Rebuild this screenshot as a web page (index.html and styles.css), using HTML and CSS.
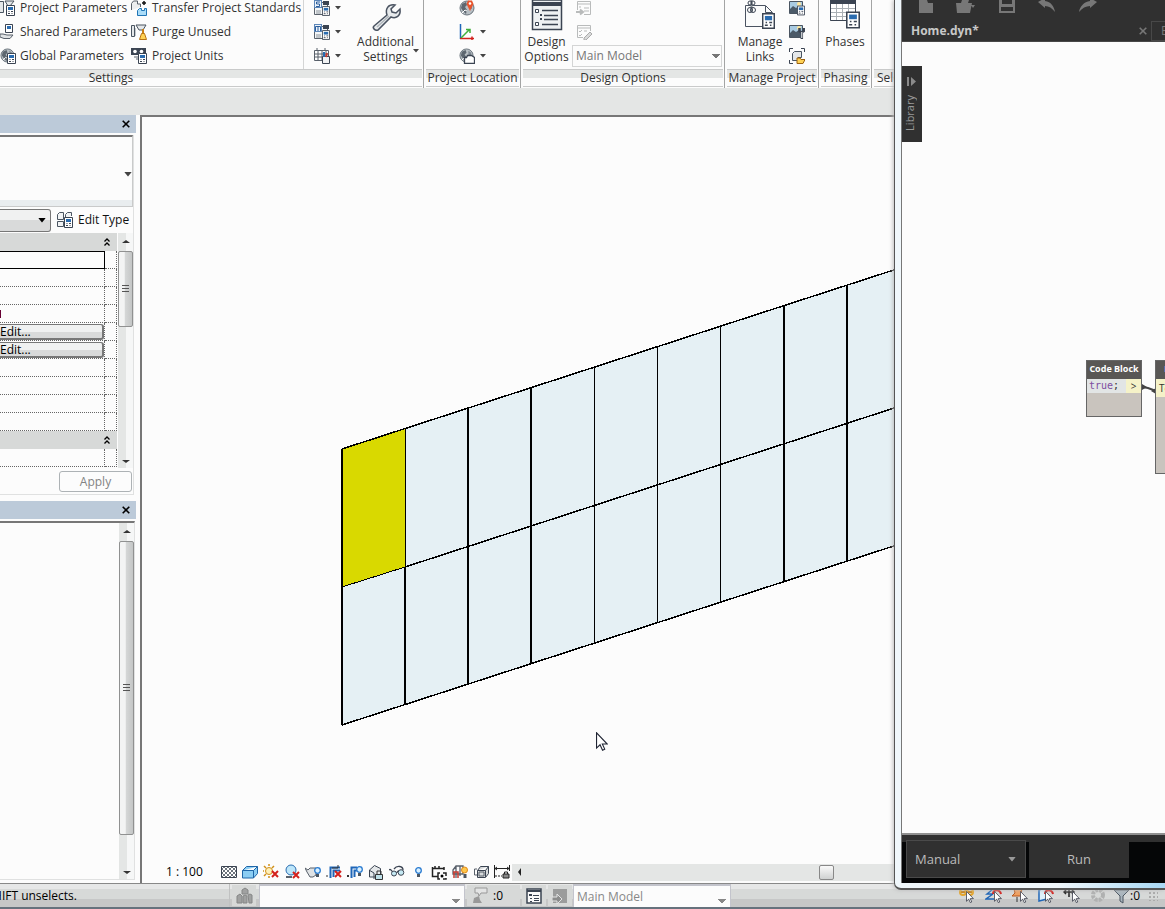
FILE: index.html
```html
<!DOCTYPE html>
<html lang="en">
<head>
	<meta charset="UTF-8">
	<title>Home.dyn</title>
	<link rel="stylesheet" href="styles.css">
</head>
<body>
	<!-- shared icon parts -->
	<svg class="defs" width="0" height="0">
		<symbol id="card" viewBox="0 0 9 11">
			<path d="M.5 .5h8v10h-8z" fill="#fff" stroke="#3b4452"/>
			<path d="M2 2h5v3H2z" fill="#2a6cb0"/>
			<path d="M2.500 6.500h1M5 6.500h2M2 8.500h2M5.500 8.500h1" stroke="#3b4452"/>
		</symbol>
		<symbol id="sheet" viewBox="0 0 16 16">
			<path d="M.5 2.500h13v12H.5z" fill="#f4f6f7" stroke="#59616b"/>
			<path d="M9 1h6v4H9z" fill="#3b4452"/>
			<path d="M0 0h8v8H0z" fill="#5c86b8"/>
			<path d="M1 1h6v6H1z" fill="#eef4fa"/>
			<path d="M2 11h5M2 13h5" stroke="#8a929a"/>
			<use href="#card" x="8" y="6" width="8" height="10"/>
		</symbol>
		<symbol id="globe" viewBox="0 0 16 16">
			<circle cx="8" cy="8" r="7" fill="#b8bfc4" stroke="#69737c"/>
			<path d="M3 4l4-2 1 3-2 2 2 3-1 4-3-3-2-3z" fill="#5d6770"/>
			<path d="M10 3l3 2v4l-3-1z" fill="#7d8790"/>
			<path d="M3 13l3-3 2 1" stroke="#fff" fill="none"/>
		</symbol>
		<symbol id="photo" viewBox="0 0 16 16">
			<path d="M.5 1.500h13v12H.5z" fill="#a9cbe2" stroke="#4a5561"/>
			<path d="M1 13V9l3-3 3 2 3-2 3 3v4z" fill="#4b5a68"/>
			<circle cx="10" cy="4" r="2" fill="#ffe69a"/>
		</symbol>
		<symbol id="cross" viewBox="0 0 8 8">
			<path d="M1 1l6 6M7 1L1 7" stroke="#d3201c" stroke-width="2"/>
		</symbol>
		<symbol id="bulb" viewBox="0 0 7 11">
			<circle cx="3.500" cy="3.500" r="2.800" fill="#d9f0ff" stroke="#2a7bd0" stroke-width="1.300"/>
			<path d="M2 7h3v3H2z" fill="#4a5561"/>
		</symbol>
		<symbol id="pointer" viewBox="0 0 11 17">
			<path d="M.5 .5v14l3.200-3 2.300 5 2-1-2.200-4.700h4.500z" fill="#fff" stroke="#1f2433"/>
		</symbol>
		<symbol id="arrow" viewBox="0 0 6 4">
			<path d="M0 0h6L3 3.500z" fill="currentColor"/>
		</symbol>
		<symbol id="close" viewBox="0 0 8 8">
			<path d="M.7 .7l6.600 6.600M7.300 .7L.7 7.300" stroke="currentColor" stroke-width="1.600"/>
		</symbol>
		<symbol id="chevrons" viewBox="0 0 6 8">
			<path d="M.5 3.500L3 1l2.500 2.500M.5 7.500L3 5l2.500 2.500" fill="none" stroke="#000" stroke-width="1.300"/>
		</symbol>
		<pattern id="checker" width="4" height="4" patternUnits="userSpaceOnUse">
			<path d="M0 0h2v2H0zM2 2h2v2H2z" fill="#6b737b"/>
		</pattern>
	</svg>

	<div class="revit">
		<div class="ribbon">
			<div class="panel settings">
				<div class="tools">
					<div class="col params">
						<button><svg width="16" height="16"><path d="M0 1.500h3.500v11H0M5 1h9l-4 5H8z" fill="#e4e7e9" stroke="#4a5561"/><use href="#card" x="6" y="5" width="9" height="11"/></svg><span>Project Parameters</span></button>
						<button><svg width="16" height="16"><path d="M5.500 .5h7v8h-7z" fill="#fff" stroke="#3b4452"/><path d="M7 2h4v3H7z" fill="#2a6cb0"/><path d="M0 10h3l4 1h6l-3 3.500H4L0 13z" fill="#dfe2e4" stroke="#59616b"/></svg><span>Shared Parameters</span></button>
						<button><svg width="16" height="16"><use href="#globe" width="15" height="15"/><use href="#card" x="7" y="5" width="9" height="11"/></svg><span>Global Parameters</span></button>
					</div>
					<div class="col standards">
						<button><svg width="16" height="16"><path d="M.5 10V3.500L2.500 1h4v3h3v3" fill="#eceeef" stroke="#59616b"/><path d="M11 3h4M13 1v4" stroke="#111" stroke-width="1.500"/><path d="M6.500 15.500v-5l2-2h2v2h3v-2h2v7z" fill="#aadcf8" stroke="#1f74b5"/></svg><span>Transfer Project Standards</span></button>
						<button><svg width="16" height="16"><path d="M.5 12.500V1.500h3v11zM5 1h10l-3 5H8z" fill="#e4e7e9" stroke="#4a5561"/><path d="M4.500 4v8" stroke="#c3c8cc"/><path d="M12 5v4" stroke="#c98014" stroke-width="2"/><path d="M8.500 15.500l2-6h3l2 6z" fill="#ffd255" stroke="#b97312"/></svg><span>Purge Unused</span></button>
						<button><svg width="16" height="16"><path d="M0 0h15v7H0z" fill="#3b4452"/><circle cx="4" cy="3.500" r="1.800" fill="#fff"/><circle cx="10.500" cy="3.500" r="1.800" fill="#fff"/><path d="M3 9h4M5 11h2" stroke="#59616b"/><use href="#card" x="7" y="5" width="9" height="11"/></svg><span>Project Units</span></button>
					</div>
					<div class="col drops">
						<button aria-label="Structural settings"><svg width="16" height="16"><use href="#sheet" width="16" height="16"/><path d="M6 2H2.500v2h3v2.500H2" fill="none" stroke="#2a5d9c"/></svg><svg class="arr" width="6" height="4"><use href="#arrow"/></svg></button>
						<button aria-label="MEP settings"><svg width="16" height="16"><use href="#sheet" width="16" height="16"/><path d="M1.500 7V2.500h5V7M4 2.500V7" fill="none" stroke="#2a5d9c"/></svg><svg class="arr" width="6" height="4"><use href="#arrow"/></svg></button>
						<button aria-label="Panel schedule templates"><svg width="16" height="16"><path d="M.5 2.500h14v10H.5zM0 6h14M0 9h14M4 2v11M8 2v11M12 2v6M3 0v3M11 0v3" fill="#fff" stroke="#59616b"/><path d="M8.500 8.500h7v7h-7z" fill="#f1f2f3" stroke="#3b4452"/><path d="M10 4v5" stroke="#2a6cb0" stroke-width="2"/><path d="M13 5l-1 4" stroke="#c63b30" stroke-width="2"/></svg><svg class="arr" width="6" height="4"><use href="#arrow"/></svg></button>
					</div>
					<button class="big additional">
						<svg width="32" height="32"><path d="M4 26l13-11c-2-6 1-11 8-10l-4 4 1 3 4 1 4-4c1 7-4 10-9 8L8 30c-3 1-6-2-4-4z" fill="#e7eaec" stroke="#4a5361" stroke-width="1.500"/><path d="M7 27L19 16" stroke="#aeb5bb" stroke-width="1.500"/></svg>
						<span>Additional<br>Settings</span>
						<svg class="arr" width="6" height="4"><use href="#arrow"/></svg>
					</button>
				</div>
				<h2>Settings</h2>
			</div>

			<div class="panel location">
				<div class="tools">
					<div class="col drops">
						<button aria-label="Location"><svg width="16" height="16"><use href="#globe" width="16" height="16"/><path d="M11 11L7.500 4 9 .5h4L14.500 4z" fill="#e8532b"/><circle cx="11" cy="3.500" r="1.300" fill="#fff"/></svg></button>
						<button aria-label="Coordinates"><svg width="16" height="16"><path d="M1.500 0v15" stroke="#1f66b8" stroke-width="1.500"/><path d="M1 14.500h14M13 12.500v4" stroke="#d3201c" stroke-width="1.500"/><path d="M2 14l8-8M7 5.500h4V9" fill="none" stroke="#3fae3a" stroke-width="1.500"/></svg><svg class="arr" width="6" height="4"><use href="#arrow"/></svg></button>
						<button aria-label="Position"><svg width="16" height="16"><use href="#globe" width="15" height="15"/><path d="M5.500 15.500v-6h2l1-2h4l3 2v6z" fill="#fff" stroke="#3b4452" stroke-width="1.300"/></svg><svg class="arr" width="6" height="4"><use href="#arrow"/></svg></button>
					</div>
				</div>
				<h2>Project Location</h2>
			</div>

			<div class="panel options">
				<div class="tools">
					<button class="big">
						<svg width="32" height="32"><path d="M1.500 0h29v29.500h-29z" fill="#eef1f3" stroke="#3b4452" stroke-width="1.500"/><path d="M1 2h30v4H1z" fill="#3b4452"/><path d="M4.500 9.500h3v3h-3zM4.500 22.500h3v3h-3z" fill="#fff" stroke="#3b4452"/><path d="M11 10.500h16M13 15.500h14M13 19.500h14M11 24.500h16" stroke="#3b4452" stroke-width="1.300"/><path d="M9 14h2v2H9zM9 18h2v2H9z" fill="#3b4452"/></svg>
						<span>Design<br>Options</span>
					</button>
					<div class="col picks">
						<button disabled aria-label="Add to set"><svg width="16" height="16"><path d="M1.500 10V1.500h13v13H8M1 4h14M8 8h5M8 11h5M3 7h2" fill="none" stroke="#b9bbbb"/><path d="M0 12h6M4 9.500L7 12l-3 2.500" fill="none" stroke="#b9bbbb" stroke-width="2"/></svg></button>
						<button disabled aria-label="Pick to edit"><svg width="16" height="16"><path d="M14.500 7V1.500h-13v12H7M1 4h14M3 7l1 1 2-2M3 11l1 1 2-2M8 7h3" fill="none" stroke="#b9bbbb"/><path d="M8 14l6-6 2 2-6 6H8z" fill="#d9dada" stroke="#aaa"/></svg></button>
						<select disabled aria-label="Active design option"><option>Main Model</option></select>
					</div>
				</div>
				<h2>Design Options</h2>
			</div>

			<div class="panel manage">
				<div class="tools">
					<button class="big">
						<svg width="32" height="32"><path d="M1.500 5.500h20l7 7v14h-27z" fill="#fafbfb" stroke="#4a5361"/><path d="M21.500 6v6.500H28" fill="none" stroke="#4a5361"/><path d="M7.500 0v12" stroke="#858c92" stroke-width="2"/><circle cx="6" cy="3" r="2" fill="none" stroke="#3b4452"/><circle cx="9" cy="3" r="2" fill="none" stroke="#3b4452"/><circle cx="6" cy="10" r="2.500" fill="none" stroke="#3b4452"/><circle cx="9" cy="10" r="2.500" fill="none" stroke="#3b4452"/><use href="#card" x="18" y="13" width="13" height="16"/></svg>
						<span>Manage<br>Links</span>
					</button>
					<div class="col">
						<button aria-label="Decal types"><svg width="16" height="16"><use href="#photo" width="16" height="16"/><use href="#card" x="8" y="5" width="8" height="11"/></svg></button>
						<button aria-label="Manage images"><svg width="16" height="16"><use href="#photo" width="16" height="16"/><path d="M10.500 4v3l2 1.500L15 7V4M12.800 8v7" fill="none" stroke="#3b4452" stroke-width="2.500"/><path d="M12.800 8v6" stroke="#fff"/></svg></button>
						<button aria-label="Starting view"><svg width="16" height="16"><path d="M.5 4V.5H4M12 .5h3.500V4M.5 12v3.500H4" fill="none" stroke="#3b4452"/><path d="M3.500 12.500v-7l2-2h7v6H9v3z" fill="#e4e7e9" stroke="#4a5561"/><path d="M8 15.500v-5.500h3l1 1.500h4l-2 4z" fill="#ffd255" stroke="#9b6110"/></svg></button>
					</div>
				</div>
				<h2>Manage Project</h2>
			</div>

			<div class="panel phasing">
				<div class="tools">
					<button class="big">
						<svg width="32" height="32"><path d="M1.500 1.500h25v19h-25zM1 8.500h25M1 12.500h25M1 16.500h25M7.500 4v17M13.500 4v17M19.500 4v17" fill="#fff" stroke="#aab0b5"/><path d="M1.500 .5h25v20h-25z" fill="none" stroke="#3b4452"/><path d="M1 0h26v4H1z" fill="#3b4452"/><use href="#card" x="17" y="11" width="14" height="18"/></svg>
						<span>Phases</span>
					</button>
				</div>
				<h2>Phasing</h2>
			</div>

			<div class="panel selection">
				<div class="tools"></div>
				<h2>Selection</h2>
			</div>
		</div>

		<div class="optionbar"></div>

		<div class="work">
			<div class="dock">
				<div class="dock-title"><button aria-label="Close properties"><svg width="8" height="8"><use href="#close"/></svg></button></div>
				<div class="properties">
					<div class="type-picker"><svg width="8" height="5" viewBox="0 0 6 4"><use href="#arrow"/></svg></div>
					<div class="type-row">
						<button class="filter" aria-label="Element filter"><svg width="8" height="5" viewBox="0 0 6 4"><use href="#arrow"/></svg></button>
						<button class="edit-type"><svg width="16" height="16"><path d="M.5 7.500v-5l2-2h4v7zM8.500 6V2.500l2-2h4V4M.5 9.500h6v5h-6z" fill="#f1f3f4" stroke="#4a5561"/><use href="#card" x="7" y="5" width="9" height="11"/></svg>Edit Type</button>
					</div>
					<div class="grid-wrap">
						<table class="grid">
							<colgroup><col class="value"><col class="assoc"></colgroup>
							<tr class="head"><td colspan="2"><svg width="6" height="8"><use href="#chevrons"/></svg></td></tr>
							<tr class="active"><td></td><td></td></tr>
							<tr><td></td><td></td></tr>
							<tr><td></td><td></td></tr>
							<tr><td><i class="caret"></i></td><td></td></tr>
							<tr><td><button>Edit...</button></td><td></td></tr>
							<tr><td><button>Edit...</button></td><td></td></tr>
							<tr><td></td><td></td></tr>
							<tr><td></td><td></td></tr>
							<tr><td></td><td></td></tr>
							<tr><td></td><td></td></tr>
							<tr class="head"><td colspan="2"><svg width="6" height="8"><use href="#chevrons"/></svg></td></tr>
							<tr><td></td><td></td></tr>
						</table>
						<div class="scroll">
							<i class="up"></i>
							<div class="thumb short"></div>
							<i class="down"></i>
						</div>
					</div>
					<div class="apply"><button disabled>Apply</button></div>
				</div>
				<div class="dock-title"><button aria-label="Close project browser"><svg width="8" height="8"><use href="#close"/></svg></button></div>
				<div class="browser">
					<div class="scroll">
						<i class="up"></i>
						<div class="thumb long"></div>
						<i class="down"></i>
					</div>
				</div>
			</div>

			<div class="view">
				<svg class="drawing" width="1023" height="746">
					<g transform="translate(-142 -116)">
						<path d="M342 448L1165 181V457L342 724z" fill="#e5f0f4"/>
						<path d="M342 448L405 428V566L342 586z" fill="#d9d900"/>
						<path d="M405 428V566M594.500 366V642M657.500 346V622M720.500 325V601M342 586L405 566" stroke="#000" fill="none" shape-rendering="crispEdges"/>
						<path d="M342 448V724M405 566V704M468 407V684M531 387V663M784 305V581M847 284V561M910 264V540" stroke="#000" stroke-width="2" shape-rendering="crispEdges"/>
						<path d="M342 448L1165 181M405 566L1165 319M342 724L1165 457" fill="none" stroke="#000" stroke-width="1.500" shape-rendering="crispEdges"/>
						<use href="#pointer" x="596" y="731" width="12" height="19"/>
					</g>
				</svg>
				<div class="viewbar">
					<span class="scale">1 : 100</span>
					<div class="viewicons">
						<svg width="16" height="16"><path d="M.5 2.500h15v11H.5z" fill="#fff"/><path d="M.5 2.500h15v11H.5z" fill="url(#checker)" stroke="#3b4452"/></svg>
						<svg width="16" height="16"><path d="M.5 6.500l4-4h11v7l-4 4.500H.5zM.5 6.500h11l4-4M11.500 6.500V14" fill="#8bcdf3" stroke="#1f66a8"/></svg>
						<svg width="16" height="16"><circle cx="6" cy="7" r="3.500" fill="#fff0b8" stroke="#d09019"/><path d="M6 0v2M6 12v2M0 7h1M1 2l2 2M11 2L9 4M1 12l2-2" stroke="#d09019" stroke-width="1.500"/><use href="#cross" x="8" y="6" width="8" height="8"/></svg>
						<svg width="16" height="16"><circle cx="7" cy="6" r="5" fill="#bde6fa" stroke="#2a6cb0"/><path d="M2 13h6" stroke="#59616b" stroke-width="2"/><use href="#cross" x="8" y="7" width="8" height="8"/></svg>
						<svg width="16" height="16"><path d="M0 4l3 2 2-2h6v7l-3 2H5L2 8z" fill="#dfe2e4" stroke="#59616b"/><use href="#bulb" x="9" y="3" width="7" height="11"/></svg>
						<svg width="16" height="16"><path d="M4.500 14V3.500H14M7.500 13V6.500H14" fill="none" stroke="#1f66b8" stroke-width="2"/><path d="M0 12h2M12 1v3M6 4h6" stroke="#333"/><use href="#cross" x="8" y="6" width="8" height="8"/></svg>
						<svg width="16" height="16"><path d="M4.500 14V3.500H10M7.500 13V6.500H10" fill="none" stroke="#1f66b8" stroke-width="2"/><path d="M0 12h2" stroke="#333" stroke-width="2"/><use href="#bulb" x="9" y="2" width="7" height="11"/></svg>
						<svg width="16" height="16"><path d="M1.500 13V6l5-4.500 6 3V13z" fill="#e4e7e9" stroke="#3b4452"/><path d="M1 6l5 3v6" fill="none" stroke="#3b4452"/><path d="M7.500 10.500h7v5h-7z" fill="#bfe0e8" stroke="#333"/><path d="M9 10V7h4v3" fill="none" stroke="#333"/></svg>
						<svg width="16" height="16"><path d="M0 6c2-2 3 3 6 3s2-2 4-2M5 5c3-4 9-3 9 1" fill="none" stroke="#3b4452" stroke-width="1.300"/><circle cx="5" cy="9.500" r="2.500" fill="#c5e9f3" stroke="#3b4452"/><circle cx="12" cy="8.500" r="2.800" fill="#c5e9f3" stroke="#3b4452"/></svg>
						<svg width="16" height="16"><use href="#bulb" x="5" y="3" width="7" height="11"/></svg>
						<svg width="16" height="16"><path d="M1.500 4.500h11M1.500 3v9.500H7M4 2v3M8 2v3M13 3v3" fill="none" stroke="#222" stroke-width="1.500"/><path d="M7 13V9h2M12 9h3v3M15 14v1h-3M7 13v2h2" fill="none" stroke="#222" stroke-width="1.500"/><circle cx="11" cy="12" r="1.500"/></svg>
						<svg width="16" height="16"><path d="M1 6l3-4h7v8H1zM4 2v12M8 2v10M1 10h10" fill="none" stroke="#59616b" stroke-width="1.300"/><path d="M1 8h5v6M2 14V8" fill="none" stroke="#c63b30" stroke-width="1.500"/><circle cx="12.500" cy="6" r="3" fill="#ffc84b" stroke="#e08a1b"/><path d="M11.500 10h3v4h-3z" fill="#4a5561"/></svg>
						<svg width="16" height="16"><path d="M4.500 6.500l3-4h8v7l-3 4h-8zM4.500 6.500h8l3-4M12.500 6.500V13" fill="#d6d9db" stroke="#3b4452"/><path d="M4 5H1.500v6H4M6 8h5v4H6z" fill="none" stroke="#59616b"/></svg>
						<svg width="16" height="16"><path d="M.5 1v13M15.500 1v6M0 4.500h15M3 3L1 4.500 3 6M13 3l2 1.500L13 6" fill="none" stroke="#222"/><path d="M1 12h7" stroke="#222" stroke-dasharray="2 1"/><path d="M9 10h6v4H9z" fill="#888" stroke="#222"/><path d="M10.500 10V8h3v2" fill="none" stroke="#222"/></svg>
					</div>
					<div class="hscroll">
						<i class="left"></i>
						<div class="hthumb"></div>
					</div>
				</div>
			</div>
		</div>

		<div class="status">
			<div class="hint">HIFT unselects.</div>
			<button class="cell" aria-label="Worksets"><svg width="17" height="17"><path d="M1 9l3-2 2 2v7H1zM6 3l3-2 3 2v4H6zM7 9l2-1 2 1v7H7zM12 8l2-1 2 1v8h-3z" fill="#a0a1a1" stroke="#858686"/></svg></button>
			<select class="workset" disabled aria-label="Active workset"><option></option></select>
			<div class="cell counter"><svg width="16" height="17"><path d="M3 1h12v5H9l-2 3-1-3H3z" fill="#e3e4e4" stroke="#999"/><path d="M1 16l1-5 5-2 1 4 2 3z" fill="#999"/></svg><span>:0</span></div>
			<button class="cell" aria-label="Design options"><svg width="16" height="16"><path d="M1 1h14v14H1z" fill="#fafafa" stroke="#3b4452" stroke-width="1.500"/><path d="M1 3h14" stroke="#3b4452" stroke-width="2"/><path d="M3 6h3v2H3zM4 10h2v1H4zM4 13h2v1H4z" fill="#3b4452"/><path d="M7 7.500h6M8 10.500h5M8 12.500h5" stroke="#3b4452"/></svg></button>
			<button class="cell" disabled aria-label="Exclude options"><svg width="16" height="16"><path d="M1 1h14v14H1z" fill="#9b9c9c"/><path d="M0 9h5V6l5 5-5 5v-3H0z" fill="#8b8c8c" stroke="#e3e4e4"/></svg></button>
			<select class="model" disabled aria-label="Design option"><option>Main Model</option></select>
			<div class="picks-end">
				<button aria-label="Select links"><svg width="18" height="18"><path d="M1 5h13" stroke="#c98014" stroke-width="2"/><circle cx="4" cy="5" r="3" fill="none" stroke="#e5a52b" stroke-width="2"/><circle cx="11" cy="5" r="3" fill="none" stroke="#e5a52b" stroke-width="2"/><use href="#pointer" x="7" y="4" width="8" height="12"/></svg></button>
				<button aria-label="Select underlay"><svg width="18" height="18"><path d="M8 2L2 7h6M8 7l-7 5h8" fill="none" stroke="#1f66b8" stroke-width="1.500"/><path d="M8 7c0-5 7-5 8 0" fill="none" stroke="#d3201c" stroke-width="2"/><use href="#pointer" x="9" y="4" width="8" height="12"/></svg></button>
				<button aria-label="Select pinned"><svg width="18" height="18"><path d="M3 2h8l-1 4 2 3H1l3-3z" fill="#f0a060" stroke="#b8571b"/><path d="M6 10v5" stroke="#333"/><use href="#pointer" x="9" y="4" width="8" height="12"/></svg></button>
				<button aria-label="Select by face"><svg width="18" height="18"><path d="M7 1L2 3v11l8-2" fill="#dff1fb" stroke="#1f66b8" stroke-width="1.500"/><path d="M8 7c0-5 7-5 8 0" fill="none" stroke="#d3201c" stroke-width="2"/><use href="#pointer" x="8" y="4" width="8" height="12"/></svg></button>
				<button aria-label="Drag on selection"><svg width="18" height="18"><path d="M1 5h10M6 1v9M3 3L1 5l2 2M9 3l2 2-2 2" fill="none" stroke="#222" stroke-width="1.500"/><use href="#pointer" x="9" y="4" width="8" height="12"/></svg></button>
				<svg class="spin" width="18" height="18"><circle cx="9" cy="8" r="5" fill="none" stroke="#b0b1b1" stroke-width="4" stroke-dasharray="3 1"/></svg>
				<div class="funnel"><svg width="17" height="16"><path d="M1 2h15l-6 6v7l-3-2V8z" fill="#aab6be" stroke="#4a5561"/></svg><span>:0</span></div>
				<i class="grip"></i>
			</div>
		</div>
	</div>

	<div class="dynamo">
		<div class="dyn-body">
			<div class="dyn-tools">
				<svg width="14" height="13"><path d="M0 0h8l1 3h5v10H0z"/></svg>
				<svg width="20" height="13"><path d="M1 13L0 3h5l1-3h7l-1 3h4l-2 10zM15 5h4l-2 3z"/></svg>
				<svg width="16" height="13"><path d="M0 0h16v13H0zM3 0v4h10V0zM2 7v4h12V7z" fill-rule="evenodd"/></svg>
				<svg width="18" height="13"><path d="M0 2l7-4v3c6 1 9 5 10 11-3-4-6-6-10-6v2z"/></svg>
				<svg width="18" height="13"><path d="M18 2l-7-4v3C5 2 1 6 0 12c3-4 7-6 11-6v2z"/></svg>
			</div>
			<div class="dyn-tabs">
				<div class="tab">Home.dyn*<button aria-label="Close tab"><svg width="8" height="8"><use href="#close"/></svg></button></div>
				<div class="tab next">B</div>
			</div>
			<div class="graph">
				<button class="library"><svg width="10" height="9"><path d="M0 0h2v9H0zM4 0l5 4.500L4 9z" fill="#8a8a8a"/></svg><span>Library</span></button>
				<svg class="wire" width="16" height="10"><path d="M0 3l6 1 8 3" fill="none" stroke="#444" stroke-width="2"/><path d="M0 0l5 3-5 3zM14 4v6l-5-3z" fill="#444"/></svg>
				<div class="node code">
					<h3>Code Block</h3>
					<div class="ports"><code><b>true</b>;</code><span>&gt;</span></div>
				</div>
				<div class="node second">
					<h3>L</h3>
					<div class="ports"><span class="in">Toggle</span></div>
				</div>
			</div>
			<div class="runbar">
				<button class="mode">Manual<svg width="8" height="5" viewBox="0 0 6 4"><use href="#arrow"/></svg></button>
				<button class="run">Run</button>
			</div>
		</div>
	</div>
</body>
</html>
```
FILE: styles.css
```css
*{
	box-sizing:border-box;
	padding:0;
	margin:0;
}
body{
	position:relative;
	overflow:hidden;
	height:100vh;
	background-color:#fcfcfc;
	color:#333;
	font:12px/16px "Open Sans","Noto Sans",sans-serif;
}
button{
	border:0;
	background:none;
	color:inherit;
	font:inherit;
}
select{
	appearance:none;
	font:inherit;
}
svg{
	display:block;
	flex:none;
}
.defs{
	position:absolute;
}
.revit{
	display:flex;
	flex-direction:column;
	height:100%;
}

/* ribbon */
.ribbon{
	display:flex;
	flex:none;
	overflow:hidden;
	height:88px;
}
.panel{
	display:flex;
	flex:none;
	flex-direction:column;
	border-right:1px solid #a3a4a4;
}
.panel h2{
	height:18px;
	margin:0 1px 0 2px;
	border-top:1px solid #c9caca;
	border-bottom:1px solid #c9caca;
	background:linear-gradient(#e4e6e5 50%,#fcfcfc 50%);
	color:#333;
	font-size:12px;
	font-weight:normal;
	line-height:16px;
	text-align:center;
	white-space:nowrap;
}
.panel:first-child h2{
	margin-left:0;
}
.tools{
	display:flex;
	height:69px;
}
.col{
	display:grid;
	grid-template-rows:repeat(3,24px);
	margin-top:-4px;
}
.col button{
	display:flex;
	align-items:center;
	gap:5px;
	white-space:nowrap;
}
.arr{
	color:#444;
}
.big{
	display:flex;
	flex-direction:column;
	align-items:center;
	line-height:15px;
}
.big svg{
	margin-bottom:2px;
}
.settings{
	width:424px;
}
.settings h2{
	padding-right:200px;
}
.params{
	width:131px;
}
.params button{
	gap:4px;
}
.standards{
	width:173px;
	border-right:1px solid #d4d5d5;
}
.drops{
	width:38px;
	margin-left:10px;
}
.drops button{
	gap:5px;
}
.additional{
	position:relative;
	width:67px;
}
.big .arr{
	position:absolute;
	right:0;
	bottom:16px;
	margin:0;
}
.location{
	width:97px;
}
.location .drops{
	margin-left:35px;
}
.options{
	width:204px;
}
.options .big{
	width:51px;
}
.picks button{
	margin-left:4px;
}
.picks select{
	width:150px;
	height:22px;
	padding-left:3px;
	margin-top:1px;
	border:1px solid #d4d5d5;
	background:linear-gradient(45deg,transparent 50%,#777 50%) 139px 8px/4px 4px no-repeat,linear-gradient(-45deg,transparent 50%,#777 50%) 143px 8px/4px 4px no-repeat,#fcfcfc;
	color:#777;
	opacity:1;
}
.manage{
	width:94px;
}
.manage .big{
	width:64px;
	padding-left:6px;
}
.phasing{
	width:53px;
}
.phasing .big{
	width:52px;
}
.selection{
	flex:1;
}
.selection h2{
	padding-left:3px;
	text-align:left;
}
.optionbar{
	flex:none;
	height:27px;
	background-color:#e4e6e5;
}

/* left palettes */
.work{
	display:flex;
	flex:1;
	min-height:0;
}
.dock{
	display:flex;
	flex:none;
	flex-direction:column;
	width:136px;
	padding-bottom:3px;
	margin-right:4px;
}
.dock-title{
	display:flex;
	flex:none;
	align-items:center;
	justify-content:flex-end;
	height:18px;
	padding-right:6px;
	background-color:#bccad9;
	color:#000;
}
.properties{
	flex:none;
	height:360px;
	margin:2px 2px 6px 0;
	border-right:1px solid #e0e1e1;
	border-bottom:1px solid #e0e1e1;
}
.type-picker{
	display:flex;
	align-items:center;
	justify-content:flex-end;
	height:72px;
	padding-top:5px;
	border-top:2px solid #777;
	border-right:1px solid #c9caca;
	border-bottom:1px solid #c9caca;
	box-shadow:inset 0 -6px #e9edef;
	color:#444;
}
.type-row{
	display:flex;
	align-items:center;
	height:26px;
}
.filter{
	display:flex;
	align-items:center;
	justify-content:flex-end;
	width:51px;
	height:23px;
	padding-right:4px;
	border:1px solid #777;
	border-left:0;
	border-radius:0 3px 3px 0;
	background:linear-gradient(#f0f1f1 50%,#d9dada 50%);
	color:#000;
}
.edit-type{
	display:flex;
	align-items:center;
	gap:5px;
	margin-left:6px;
	color:#111;
	white-space:nowrap;
}
.grid-wrap{
	display:flex;
	height:235px;
}
.grid{
	flex:none;
	width:117px;
	height:234px;
	margin-right:1px;
	border-collapse:separate;
	border-spacing:0;
	table-layout:fixed;
}
.value{
	width:105px;
}
.assoc{
	width:12px;
}
.grid td{
	height:18px;
	border-right:1px dotted #666;
	border-bottom:1px dotted #666;
	line-height:0;
}
.grid .head td{
	padding-left:104px;
	border:0;
	background-color:#d7d9d8;
}
.grid .active td:first-child{
	border:1px solid #000;
	border-left:0;
}
.grid button{
	display:block;
	width:104px;
	height:16px;
	border:1px solid #777;
	border-width:1px 2px 2px 0;
	border-radius:0 3px 3px 0;
	background:linear-gradient(#f0f1f1 50%,#d9dada 50%);
	color:#000;
	line-height:13px;
	text-align:left;
}
.caret{
	display:block;
	width:1px;
	height:8px;
	background-color:#603;
}
.scroll{
	display:flex;
	flex-direction:column;
	align-items:center;
	width:15px;
	background:linear-gradient(90deg,#e4e6e5 50%,#f6f7f7 50%);
}
.up,.down{
	flex:none;
	width:0;
	border:4px solid transparent;
}
.up{
	margin:7px 0 8px;
	border-top:0;
	border-bottom:3px solid #333;
}
.down{
	margin-top:auto;
	margin-bottom:5px;
	border-top:3px solid #333;
	border-bottom:0;
}
.thumb{
	display:flex;
	align-items:center;
	justify-content:center;
	width:15px;
	border:1px solid #909191;
	border-radius:2px;
	background:linear-gradient(90deg,#f3f4f4 40%,#d4d6d6 50%,#c4c6c6);
}
.thumb:after{
	width:7px;
	height:8px;
	background:repeating-linear-gradient(#555 0,#555 1px,transparent 1px,transparent 3px);
	content:"";
}
.short{
	height:76px;
}
.long{
	flex:1;
	margin-bottom:36px;
}
.apply{
	display:flex;
	justify-content:flex-end;
	padding:3px 1px 0 0;
}
.apply button{
	width:73px;
	height:21px;
	border:1px solid #adb2b5;
	border-radius:3px;
	color:#838383;
}
.browser{
	display:flex;
	flex:1;
	justify-content:flex-end;
	margin:2px 1px 0 0;
	border-top:2px solid #777;
	border-right:1px solid #e0e1e1;
	border-bottom:1px solid #e0e1e1;
}

/* drawing view */
.view{
	display:flex;
	flex:1;
	flex-direction:column;
	min-width:0;
	overflow:hidden;
	border-top:2px solid #777;
	border-left:2px solid #777;
}
.drawing{
	flex:1;
	min-height:0;
}
.viewbar{
	display:flex;
	flex:none;
	align-items:center;
	height:20px;
	padding-bottom:2px;
	color:#000;
}
.scale{
	width:79px;
	padding-left:24px;
	white-space:nowrap;
}
.viewicons{
	display:flex;
	gap:5px;
}
.hscroll{
	display:flex;
	flex:1;
	align-items:center;
	height:17px;
	margin-left:2px;
	background-color:#e4e6e5;
}
.left{
	margin-left:6px;
	border:4px solid transparent;
	border-right:3px solid #222;
	border-left:0;
}
.hthumb{
	width:15px;
	height:15px;
	margin-left:298px;
	border:1px solid #888;
	border-radius:2px;
	background:linear-gradient(#fafafa,#cfd1d1);
}

/* status bar */
.status{
	display:flex;
	flex:none;
	align-items:stretch;
	height:26px;
	padding-right:7px;
	border-top:1px solid #888;
	border-bottom:2px solid #66727d;
	background:linear-gradient(#e6e7e7 20%,#d7d9d8 20%,#d7d9d8 65%,#c6c7c7 65%);
}
.hint{
	display:flex;
	flex:none;
	justify-content:flex-end;
	overflow:hidden;
	width:230px;
	padding-right:152px;
	border-right:1px solid #c0c1c1;
	color:#000;
	line-height:24px;
	white-space:nowrap;
}
.cell{
	display:flex;
	flex:none;
	align-items:center;
	justify-content:center;
	width:24px;
	margin:1px 0 1px 2px;
	background-color:#d7d9d8;
}
.hint + .cell{
	margin-right:3px;
}
.status select{
	flex:none;
	padding-left:3px;
	border:1px solid #c3c4cc;
	border-width:2px 1px 0;
	background:linear-gradient(45deg,transparent 50%,#888 50%) right 8px bottom 4px/4px 4px no-repeat,linear-gradient(-45deg,transparent 50%,#888 50%) right 4px bottom 4px/4px 4px no-repeat,#fcfcfc;
	color:#888;
	opacity:1;
}
.status .workset{
	width:206px;
}
.counter{
	gap:5px;
	justify-content:flex-start;
	width:53px;
	padding-left:5px;
	color:#000;
}
.status .model{
	width:158px;
	margin-left:1px;
}
.picks-end{
	display:flex;
	align-items:center;
	gap:8px;
	margin-left:auto;
}
.funnel{
	display:flex;
	align-items:center;
	margin-left:-2px;
	color:#000;
}
.grip{
	width:10px;
	height:10px;
	background:radial-gradient(#aaa 1px,transparent 1px) 0 0/4px 4px;
}

/* floating window */
.dynamo{
	position:absolute;
	top:0;
	right:0;
	width:271px;
	height:calc(100% - 19px);
	padding:0 0 5px 6px;
	border:1px solid #555;
	border-width:0 0 2px 1px;
	border-radius:0 0 0 7px;
	background:linear-gradient(90deg,#f0f7fb 60%,#a8d8f4);
	box-shadow:-1px 0 4px #bbb;
}
.dyn-body{
	display:flex;
	flex-direction:column;
	height:100%;
	border-left:1px solid #777;
}
.dyn-tools{
	display:flex;
	flex:none;
	gap:23px;
	height:21px;
	padding-left:17px;
	background-color:#303030;
	fill:#777;
}
.dyn-tabs{
	display:flex;
	flex:none;
	height:21px;
	border-bottom:1px solid #484848;
	background-color:#303030;
}
.tab{
	display:flex;
	align-items:center;
	justify-content:space-between;
	width:249px;
	padding:0 4px 0 9px;
	color:#c8c8c8;
	font-weight:bold;
}
.tab button{
	color:#777;
}
.tab.next{
	overflow:hidden;
	flex:1;
	border:1px solid #484848;
	border-right:0;
	color:#777;
	font-weight:normal;
}
.graph{
	position:relative;
	flex:1;
	overflow:hidden;
	background-color:#fcfcfc;
}
.library{
	display:flex;
	flex-direction:column;
	align-items:center;
	gap:9px;
	width:20px;
	height:76px;
	padding:11px 4px 0 0;
	margin-top:24px;
	background-color:#303030;
	color:#999;
	font-size:11px;
	line-height:14px;
}
.library svg{
	margin-left:4px;
}
.library span{
	writing-mode:vertical-rl;
	transform:rotate(180deg);
}
/* nodes are placed on a free canvas */
.node{
	position:absolute;
	top:318px;
	border:1px solid #666;
	background-color:#c9c4be;
	font-size:10px;
}
.node h3{
	height:18px;
	background-color:#595755;
	color:#fff;
	font-size:9px;
	line-height:16px;
	text-align:center;
	white-space:nowrap;
}
.code{
	left:184px;
	width:56px;
	height:57px;
}
.second{
	left:253px;
	width:90px;
	height:114px;
}
.second h3{
	padding-left:8px;
	color:#6ab0e8;
	text-align:left;
}
.ports{
	display:flex;
	height:14px;
	line-height:14px;
}
.ports code{
	width:39px;
	padding-left:2px;
	background-color:#e2e5e5;
	font:10px/14px "DejaVu Sans Mono",monospace;
}
.ports b{
	color:#7d4ea0;
	font-weight:normal;
}
.ports span{
	flex:1;
	background-color:#f5f2c8;
	text-align:center;
}
.ports .in{
	height:18px;
	padding-left:3px;
	line-height:18px;
	text-align:left;
}
.wire{
	position:absolute;
	top:342px;
	left:240px;
}
.runbar{
	display:flex;
	flex:none;
	gap:3px;
	height:50px;
	padding:5px 4px;
	border-top:2px solid #909090;
	background:linear-gradient(#303030 7px,#050607 7px);
	color:#bbb;
	font-size:13px;
}
.mode{
	display:flex;
	align-items:center;
	justify-content:space-between;
	width:120px;
	padding:0 9px 0 8px;
	border:1px solid #4a4a4a;
	background-color:#303030;
}
.mode svg{
	color:#999;
}
.run{
	width:100px;
	background-color:#303030;
}
```
